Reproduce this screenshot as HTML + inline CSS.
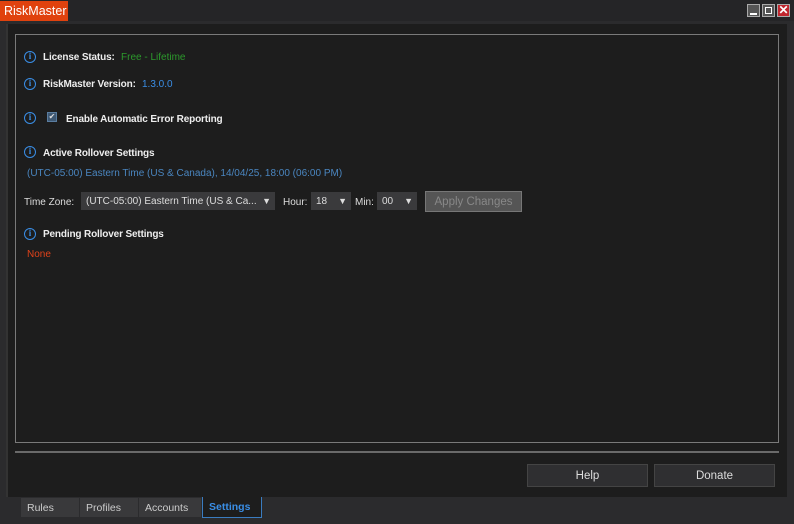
<!DOCTYPE html>
<html><head><meta charset="utf-8"><style>
*{margin:0;padding:0;box-sizing:border-box}
body{width:794px;height:524px;background:#2b2b2d;font-family:"Liberation Sans",Arial,sans-serif;font-size:10px;color:#e8e8e8;position:relative;overflow:hidden}
.a{position:absolute;white-space:nowrap}
.t{margin-top:1px}
.title{left:0;top:0;width:794px;height:21px;background:#252527}
.logo{left:0;top:1px;width:68px;height:20px;background:#e0420e;color:#fff;font-size:12.5px;line-height:20px;padding-left:4px;overflow:hidden}
.main{left:6px;top:24px;width:781px;height:473px;background:#1d1d1d;border-left:2px solid #333;}
.box{left:15px;top:34px;width:764px;height:409px;border:1px solid #7a7a7a;}
.ic{width:12px;height:12px;border:1.5px solid #3a8ee6;border-radius:50%;color:#3a8ee6;font-size:9px;font-weight:bold;text-align:center;line-height:9px;font-family:"Liberation Serif",serif}
.b{font-weight:bold;color:#eee;letter-spacing:-0.15px;margin-top:1px}
.sel{background:#3a3a3c;color:#ddd;height:18px;line-height:18px;padding-left:5px;overflow:hidden}
.sel span{position:absolute;right:4px;top:0;font-size:9px}
.btn{background:#2f2f31;border:1px solid #444;color:#ddd;font-size:11.5px;text-align:center;line-height:22px}
.tab{top:498px;height:19px;line-height:20px;color:#ccc;background:#39393b;padding-left:6px;font-size:10.5px}
.wb{top:4px;width:13px;height:13px;border:1px solid #aaa;background:#555}
</style></head><body>
<div class="a title"></div>
<div class="a logo">RiskMaster</div>
<div class="a wb" style="left:747px"><div class="a" style="left:2px;top:8px;width:7px;height:2px;background:#fff"></div></div>
<div class="a wb" style="left:762px"><div class="a" style="left:2px;top:2px;width:7px;height:7px;border:1.5px solid #fff"></div></div>
<div class="a wb" style="left:777px;background:#c0262e;color:#fff;font-weight:bold;font-size:12px;line-height:11px;text-align:center">✕</div>
<div class="a main"></div>
<div class="a box"></div>

<div class="a ic" style="left:24px;top:51px">i</div>
<div class="a b" style="left:43px;top:51px">License Status:</div>
<div class="a t" style="left:121px;top:51px;color:#2c9a2c">Free - Lifetime</div>

<div class="a ic" style="left:24px;top:78px">i</div>
<div class="a b" style="left:43px;top:78px">RiskMaster Version:</div>
<div class="a t" style="left:142px;top:78px;color:#3a8ee6">1.3.0.0</div>

<div class="a ic" style="left:24px;top:112px">i</div>
<div class="a" style="left:47px;top:112px;width:10px;height:10px;background:#3e5873;border:1px solid #5a7da0;color:#ddd;font-size:8px;line-height:8px;text-align:center">✔</div>
<div class="a b" style="left:66px;top:113px">Enable Automatic Error Reporting</div>

<div class="a ic" style="left:24px;top:146px">i</div>
<div class="a b" style="left:43px;top:147px">Active Rollover Settings</div>
<div class="a t" style="left:27px;top:167px;color:#4a86c0">(UTC-05:00) Eastern Time (US &amp; Canada), 14/04/25, 18:00 (06:00 PM)</div>

<div class="a t" style="left:24px;top:196px;color:#ddd">Time Zone:</div>
<div class="a sel" style="left:81px;top:192px;width:194px;line-height:19px">(UTC-05:00) Eastern Time (US &amp; Ca...<span>▼</span></div>
<div class="a t" style="left:283px;top:196px;color:#ddd">Hour:</div>
<div class="a sel" style="left:311px;top:192px;width:40px;line-height:19px">18<span>▼</span></div>
<div class="a t" style="left:355px;top:196px;color:#ddd">Min:</div>
<div class="a sel" style="left:377px;top:192px;width:40px;line-height:19px">00<span>▼</span></div>
<div class="a" style="left:425px;top:191px;width:97px;height:21px;background:#555;border:1px solid #777;color:#888;font-size:11.5px;text-align:center;line-height:20px">Apply Changes</div>

<div class="a ic" style="left:24px;top:228px">i</div>
<div class="a b" style="left:43px;top:228px">Pending Rollover Settings</div>
<div class="a t" style="left:27px;top:248px;color:#e0421a">None</div>

<div class="a" style="left:15px;top:451px;width:764px;height:2px;background:#6a6a6a"></div>
<div class="a btn" style="left:527px;top:464px;width:121px;height:23px">Help</div>
<div class="a btn" style="left:654px;top:464px;width:121px;height:23px">Donate</div>

<div class="a tab" style="left:21px;width:58px">Rules</div>
<div class="a tab" style="left:80px;width:58px">Profiles</div>
<div class="a tab" style="left:139px;width:62px">Accounts</div>
<div class="a tab" style="left:202px;top:497px;width:60px;height:21px;background:#1d1d1d;border:1px solid #3a7cc0;border-top:none;color:#3a8ee6;font-weight:bold;line-height:21px">Settings</div>
</body></html>
